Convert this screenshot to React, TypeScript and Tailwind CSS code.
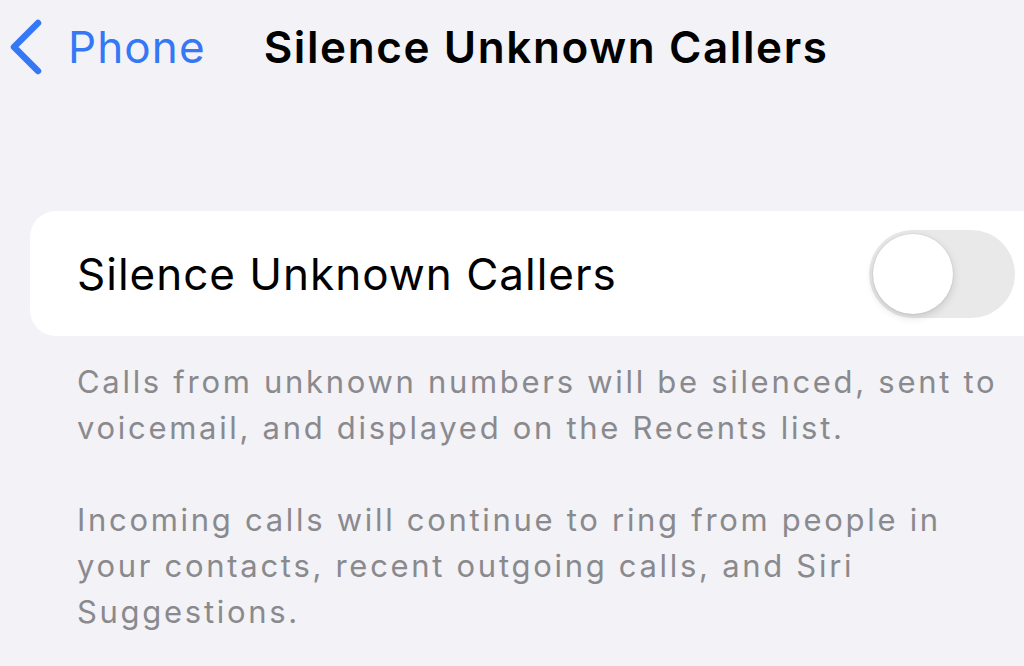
import { useState } from "react";

const font = { fontFamily: "Inter, 'Noto Sans', sans-serif" };

function Toggle() {
  const [on, setOn] = useState(false);
  return (
    <button
      onClick={() => setOn(!on)}
      className={`relative h-[88px] w-[146px] shrink-0 rounded-full transition-colors ${on ? "bg-[#34c759]" : "bg-[#e9e9ea]"}`}
    >
      <span
        className={`absolute top-[4px] h-[80px] w-[80px] rounded-full bg-white shadow-[0_3px_8px_rgba(0,0,0,0.15),0_0_0_1px_rgba(0,0,0,0.04)] transition-all ${on ? "left-[62px]" : "left-[4px]"}`}
      />
    </button>
  );
}

export default function App() {
  return (
    <div className="h-[666px] w-[1024px] overflow-hidden bg-[#f2f2f7]" style={font}>
      <header className="flex h-[94px] items-center">
        <div className="flex items-center text-[#3478f6]">
          <svg width="46" height="56" viewBox="0 0 46 56" className="ml-[4px]">
            <path d="M34 4 L10 28 L34 52" fill="none" stroke="currentColor" strokeWidth="6.5" strokeLinecap="round" strokeLinejoin="round" />
          </svg>
          <span className="ml-[18px] text-[44px] tracking-[1.1px]">Phone</span>
        </div>
        <h1 className="ml-[58px] text-[44px] font-semibold tracking-[1.6px] text-black">Silence Unknown Callers</h1>
      </header>

      <div className="mt-[117px] ml-[30px] mr-[-40px] flex h-[125px] items-center justify-between rounded-[26px] bg-white pl-[47px] pr-[49px]">
        <span className="text-[44px] tracking-[1px] text-black">Silence Unknown Callers</span>
        <Toggle />
      </div>

      <div className="mt-[23px] pl-[77px] pr-[10px] text-[31px] leading-[46px] tracking-[2.7px] text-[#8a8a8e]">
        <p>Calls from unknown numbers will be silenced, sent to voicemail, and displayed on the Recents list.</p>
        <p className="mt-[46px]">Incoming calls will continue to ring from people in your contacts, recent outgoing calls, and Siri Suggestions.</p>
      </div>
    </div>
  );
}
